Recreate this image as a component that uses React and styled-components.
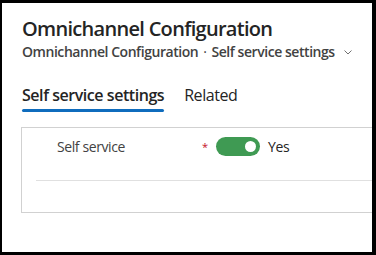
import React from 'react'
import styled, { createGlobalStyle } from 'styled-components'

const GlobalStyle = createGlobalStyle`
  html, body {
    margin: 0;
    padding: 0;
    background: #000;
  }
  body {
    font-family: "Open Sans", "Noto Sans", sans-serif;
    color: #242424;
  }
`

const Frame = styled.div`
  box-sizing: border-box;
  width: 376px;
  height: 255px;
  border-style: solid;
  border-color: #000;
  border-width: 3px 4px 3px 2px;
  background: #fff;
  overflow: hidden;
`

const Header = styled.div`
  padding: 13px 0 0 20px;
  white-space: nowrap;
`

const Title = styled.h1`
  margin: 0;
  font-size: 20px;
  line-height: 26px;
  font-weight: 600;
  letter-spacing: -0.7px;
  color: #242424;
`

const Crumbs = styled.div`
  display: flex;
  align-items: center;
  gap: 5px;
  font-size: 14px;
  line-height: 20px;
  font-weight: 600;
  letter-spacing: -0.45px;
  color: #424242;
`

const Dot = styled.span`
  font-weight: 400;
`

const Tabs = styled.div`
  display: flex;
  gap: 20px;
  margin: 22px 0 0 20px;
`

const Tab = styled.div`
  position: relative;
  font-size: 16px;
  line-height: 22px;
  padding-bottom: 8px;
  letter-spacing: -0.45px;
  font-weight: ${p => (p.$active ? 600 : 400)};
  color: #242424;

  &::after {
    content: '';
    display: ${p => (p.$active ? 'block' : 'none')};
    position: absolute;
    left: 0;
    right: 0;
    bottom: 2px;
    height: 3px;
    border-radius: 2px;
    background: #0f6cbd;
  }
`

const Card = styled.div`
  margin: 13px -10px 0 19px;
  border: 1px solid #d1d1d1;
  height: 84px;
`

const FieldRow = styled.div`
  display: flex;
  align-items: center;
  height: 36px;
  padding-left: 35px;
`

const Label = styled.div`
  width: 145px;
  font-size: 14px;
  letter-spacing: -0.4px;
  color: #424242;
`

const Required = styled.span`
  width: 14px;
  font-size: 11px;
  color: #c50f1f;
`

const Switch = styled.span`
  display: flex;
  align-items: center;
  justify-content: flex-end;
  box-sizing: border-box;
  width: 44px;
  height: 19px;
  padding: 0 4px;
  border-radius: 10px;
  background: #3f9a53;

  &::after {
    content: '';
    width: 11px;
    height: 11px;
    border-radius: 50%;
    background: #fff;
  }
`

const Value = styled.span`
  margin-left: 8px;
  font-size: 14px;
  letter-spacing: -0.4px;
  color: #242424;
`

const Divider = styled.div`
  margin: 16px 0 0 14px;
  border-top: 1px solid #e0e0e0;
`

function Chevron() {
  return (
    <svg width="12" height="12" viewBox="0 0 12 12" style={{ marginLeft: 2 }}>
      <path d="M2.5 4.5 L6 8 L9.5 4.5" fill="none" stroke="#707070" strokeWidth="1" />
    </svg>
  )
}

export default function App() {
  return (
    <>
      <GlobalStyle />
      <Frame>
        <Header>
          <Title>Omnichannel Configuration</Title>
          <Crumbs>
            <span>Omnichannel Configuration</span>
            <Dot>·</Dot>
            <span>Self service settings</span>
            <Chevron />
          </Crumbs>
        </Header>
        <Tabs>
          <Tab $active>Self service settings</Tab>
          <Tab>Related</Tab>
        </Tabs>
        <Card>
          <FieldRow>
            <Label>Self service</Label>
            <Required>*</Required>
            <Switch />
            <Value>Yes</Value>
          </FieldRow>
          <Divider />
        </Card>
      </Frame>
    </>
  )
}
